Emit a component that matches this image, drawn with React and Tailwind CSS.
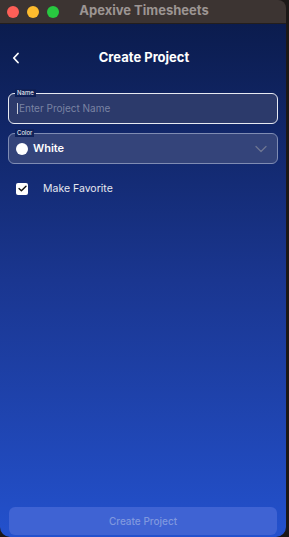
import React from "react";

export default function App() {
  return (
    <div className="w-[289px] h-[537px] bg-[#1c1817] flex overflow-hidden" style={{ fontFamily: "Inter, 'Liberation Sans', sans-serif" }}>
      <div className="w-[286px] h-[537px] flex flex-col rounded-b-[10px] rounded-tr-[8px] overflow-hidden">
        {/* Title bar */}
        <div className="h-[24px] bg-[#3c3432] flex items-center relative shrink-0 border-b border-[#231e1d]">
          <div className="flex items-center gap-[8px] pl-[7px]">
            <span className="w-[12px] h-[12px] rounded-full bg-[#fe5f57]" />
            <span className="w-[12px] h-[12px] rounded-full bg-[#febc2e]" />
            <span className="w-[12px] h-[12px] rounded-full bg-[#28c840]" />
          </div>
          <div className="absolute left-0 right-0 top-0 h-[22px] flex items-center justify-center pl-[2px] text-[13px] font-bold text-[#9c9593] pointer-events-none">
            Apexive Timesheets
          </div>
        </div>
        {/* Content */}
        <div className="flex-1 flex flex-col bg-gradient-to-b from-[#0b1c4e] via-[#1a3690] to-[#2351cd] px-[8px]">
          <div className="h-[69px] flex items-center relative">
            <svg className="absolute left-[4px] top-[28px]" width="8" height="12" viewBox="0 0 8 12" fill="none">
              <path d="M6 1.5L1.8 6L6 10.5" stroke="white" strokeWidth="1.8" strokeLinecap="round" strokeLinejoin="round" />
            </svg>
            <div className="flex-1 text-center text-white font-bold text-[13px] pl-[2px] pb-[1px]">Create Project</div>
          </div>

          {/* Name field */}
          <div className="relative h-[31px] rounded-[6px] border-[1.5px] border-[#e6e9f2] bg-[#2c3a6b] flex items-center pl-[8px]">
            <span className="absolute -top-[5px] left-[6px] px-[2px] text-[6px] leading-[8px] text-white bg-[#0e1f55]">Name</span>
            <span className="w-[1px] h-[11px] bg-[#c8cbd6] mr-[1px]" />
            <span className="text-[10px] text-[#7a83a3]">Enter Project Name</span>
          </div>

          {/* Color field */}
          <div className="relative h-[31px] mt-[9px] rounded-[6px] border border-[#7f8cb3] bg-[#34447a] flex items-center pl-[7px] pr-[10px]">
            <span className="absolute -top-[5px] left-[6px] px-[2px] text-[6px] leading-[8px] text-white bg-[#10225a]">Color</span>
            <span className="w-[12px] h-[12px] rounded-full bg-white" />
            <span className="ml-[5px] text-[11px] font-semibold text-white flex-1">White</span>
            <svg width="12" height="8" viewBox="0 0 12 8" fill="none">
              <path d="M1 1.5L6 6.5L11 1.5" stroke="#6d7592" strokeWidth="1.3" strokeLinecap="round" strokeLinejoin="round" />
            </svg>
          </div>

          {/* Checkbox */}
          <div className="flex items-center mt-[17px] pl-[8px]">
            <span className="w-[12px] h-[12px] rounded-[2px] bg-white flex items-center justify-center">
              <svg width="9" height="7" viewBox="0 0 9 7" fill="none">
                <path d="M1 3.6L3.4 5.8L8 1.2" stroke="#111" strokeWidth="1.4" strokeLinecap="round" strokeLinejoin="round" />
              </svg>
            </span>
            <span className="ml-[15px] text-[10.5px] text-[#e6e8f0]">Make Favorite</span>
          </div>

          <div className="flex-1" />

          {/* Button */}
          <div className="h-[28px] mb-[2px] ml-[1px] mr-[1px] rounded-[6px] bg-[#3f63d3] flex items-center justify-center text-[10px] font-medium text-[#7f98df]">
            Create Project
          </div>
        </div>
      </div>
    </div>
  );
}
